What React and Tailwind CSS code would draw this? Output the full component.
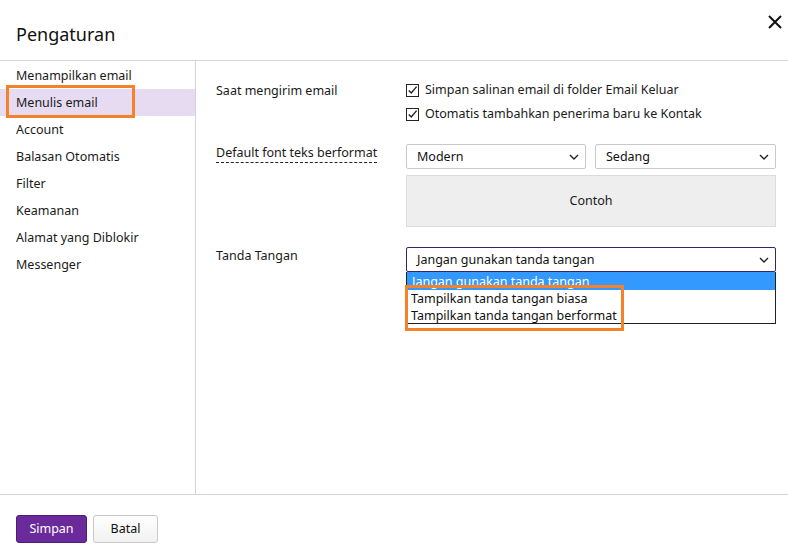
import React from 'react';

const font = { fontFamily: '"Noto Sans", "Open Sans", sans-serif' };

const navItems = [
  'Menampilkan email',
  'Menulis email',
  'Account',
  'Balasan Otomatis',
  'Filter',
  'Keamanan',
  'Alamat yang Diblokir',
  'Messenger',
];

const Chevron = () => (
  <svg width="10" height="6" viewBox="0 0 10 6" className="shrink-0">
    <path d="M1 1 L5 5 L9 1" fill="none" stroke="#222" strokeWidth="1.4" />
  </svg>
);

const CheckBox = () => (
  <svg width="13" height="13" viewBox="0 0 13 13" className="shrink-0">
    <rect x="0.5" y="0.5" width="12" height="12" fill="none" stroke="#222" strokeWidth="1" />
    <path d="M2.8 6.4 L5.3 9 L10.6 2.6" fill="none" stroke="#222" strokeWidth="1.4" />
  </svg>
);

const Select = ({ value, className = '', border = 'border-[#c9c9c9]' }) => (
  <div className={`flex items-center justify-between h-[25px] pl-[10px] pr-[6px] bg-white border rounded-[2px] ${border} ${className}`}>
    <span className="text-[12.5px] text-[#111] pt-[1px]">{value}</span>
    <Chevron />
  </div>
);

export default function App() {
  return (
    <div className="w-[788px] h-[555px] bg-white flex flex-col relative text-[#1a1a1a]" style={font}>
      {/* header */}
      <div className="h-[61px] border-b border-[#d6d2e2] flex items-start justify-between shrink-0">
        <h1 className="text-[18px] pl-4 pt-[22px] leading-6 text-[#111]">Pengaturan</h1>
        <button className="mt-[13px] mr-[4px] p-[2px]">
          <svg width="14" height="14" viewBox="0 0 14 14">
            <path d="M1 1 L13 13 M13 1 L1 13" stroke="#111" strokeWidth="2" />
          </svg>
        </button>
      </div>

      {/* body */}
      <div className="flex flex-1 min-h-0">
        <div className="w-[196px] border-r border-[#d6d2e2] shrink-0 pt-[1px]">
          {navItems.map((item) => (
            <div
              key={item}
              className={`h-[27px] flex items-center pl-4 pt-[2px] text-[12.5px] ${item === 'Menulis email' ? 'bg-[#e6dbf1]' : ''}`}
            >
              {item}
            </div>
          ))}
        </div>

        <div className="flex-1 pl-5 pt-[19px] text-[12.5px]">
          <div className="flex">
            <div className="w-[190px] leading-5 pt-[1px]">Saat mengirim email</div>
            <div className="flex flex-col gap-1">
              <div className="flex items-center gap-[6px] h-5">
                <CheckBox />
                <span className="pt-[1px]">Simpan salinan email di folder Email Keluar</span>
              </div>
              <div className="flex items-center gap-[6px] h-5">
                <CheckBox />
                <span className="pt-[1px]">Otomatis tambahkan penerima baru ke Kontak</span>
              </div>
            </div>
          </div>

          <div className="flex mt-5">
            <div className="w-[190px] leading-4 pt-[1px]">
              <span className="border-b border-dashed border-[#222] inline-block leading-4 pb-[1px]">Default font teks berformat</span>
            </div>
            <div className="w-[370px]">
              <div className="flex gap-[9px]">
                <Select value="Modern" className="w-[180px]" />
                <Select value="Sedang" className="w-[181px]" />
              </div>
              <div className="mt-[6px] h-[52px] bg-[#eeeeee] border border-[#dcdcdc] flex items-center justify-center">
                Contoh
              </div>
            </div>
          </div>

          <div className="flex mt-5">
            <div className="w-[190px] leading-4 pt-[1px]">Tanda Tangan</div>
            <div className="w-[370px]">
              <Select value="Jangan gunakan tanda tangan" border="border-[#3b2463]" />
              <div className="border border-t-0 border-[#222] bg-white h-[52px] overflow-hidden">
                <div className="bg-[#3399ff] text-white h-[18px] leading-[18px] pl-[5px] overflow-hidden">
                  <div className="mt-[1px]">Jangan gunakan tanda tangan</div>
                </div>
                <div className="pl-[4px] leading-[17px] text-[#111]">Tampilkan tanda tangan biasa</div>
                <div className="pl-[4px] leading-[17px] text-[#111]">Tampilkan tanda tangan berformat</div>
              </div>
            </div>
          </div>
        </div>
      </div>

      {/* footer */}
      <div className="h-[61px] border-t border-[#d6d2e2] shrink-0 flex items-start gap-[6px] pl-4 pt-[20px]">
        <button className="h-[28px] w-[71px] rounded-[3px] bg-[#6b2a9b] border border-[#4f1c78] text-white text-[12.5px]">
          Simpan
        </button>
        <button className="h-[28px] w-[65px] rounded-[3px] bg-gradient-to-b from-white to-[#f1f1f1] border border-[#c8c8c8] text-[#111] text-[12.5px]">
          Batal
        </button>
      </div>

      {/* annotation boxes */}
      <div className="absolute left-[6px] top-[85px] w-[129px] h-[33px] border-[3px] border-[#f5822a] pointer-events-none" />
      <div className="absolute left-[405px] top-[285px] w-[219px] h-[46px] border-[3px] border-[#f5822a] pointer-events-none" />
    </div>
  );
}
